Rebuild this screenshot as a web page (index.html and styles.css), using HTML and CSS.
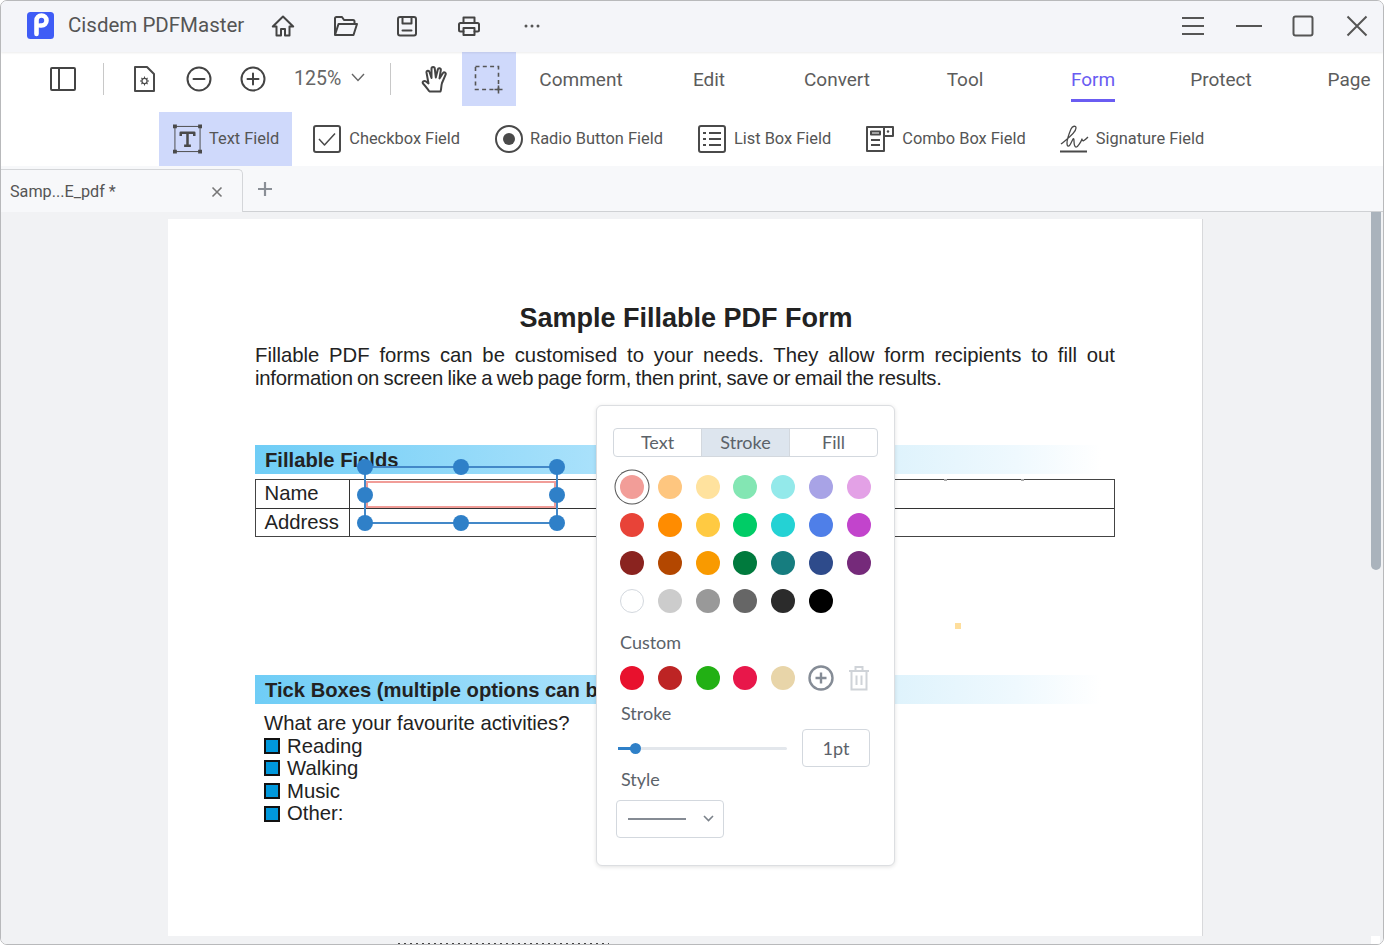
FILE: index.html
```html
<!DOCTYPE html>
<html lang="en">
<head>
<meta charset="utf-8">
<title>Cisdem PDFMaster</title>
<link rel="stylesheet" href="styles.css">
</head>
<body>
<div class="window">
  <header class="titlebar">
    <svg class="logo" viewBox="0 0 27 27"><rect width="27" height="27" rx="3.5" fill="#3f5cf6"/><path d="M9.5 22 V8.500 a5 5 0 1 1 5 5 h-1.500" fill="none" stroke="#fff" stroke-width="4.600" stroke-linecap="round"/></svg>
    <span class="app-name">Cisdem PDFMaster</span>
    <div class="title-tools">
      <div class="title-btn"><svg class="ico" width="24" height="24" viewBox="0 0 24 24"><path d="M12 2.500 1.800 12.500H5.500V21.500H10V15H14V21.500H18.500V12.500H22.200Z"/></svg></div>
      <div class="title-btn"><svg class="ico" width="25" height="24" viewBox="0 0 25 24"><path d="M2 21V4.500A1.500 1.500 0 0 1 3.500 3H9L11 6H20A1.500 1.500 0 0 1 21.500 7.500V10M2 21 5.500 10H24L20.500 21Z"/></svg></div>
      <div class="title-btn"><svg class="ico" width="22" height="24" viewBox="0 0 22 24"><rect x="2" y="3" width="18" height="18.500" rx="2"/><path d="M6.500 3V9.500H15.500V3M6.500 16.500H15.500"/></svg></div>
      <div class="title-btn"><svg class="ico" width="24" height="24" viewBox="0 0 24 24"><path d="M6.500 9V3.500H17.500V9M6.500 17.500H3.500A1.500 1.500 0 0 1 2 16V10.500A1.500 1.500 0 0 1 3.500 9H20.500A1.500 1.500 0 0 1 22 10.500V16A1.500 1.500 0 0 1 20.500 17.500H17.500"/><rect x="6.500" y="14" width="11" height="7"/></svg></div>
      <div class="title-btn"><svg width="16" height="6" viewBox="0 0 16 6"><circle cx="2" cy="3" r="1.500" fill="#555"/><circle cx="8" cy="3" r="1.500" fill="#555"/><circle cx="14" cy="3" r="1.500" fill="#555"/></svg></div>
    </div>
    <div class="win-tools">
      <div class="win-btn win-menu"><svg class="ico-thin" width="24" height="20" viewBox="0 0 24 20"><path d="M1 2H23M1 10H23M1 18H23"/></svg></div>
      <div class="win-btn"><svg class="ico-thin" width="26" height="4" viewBox="0 0 26 4"><path d="M0 2H26"/></svg></div>
      <div class="win-btn"><svg class="ico-thin" width="22" height="22" viewBox="0 0 22 22"><rect x="1.500" y="1.500" width="19" height="19" rx="2"/></svg></div>
      <div class="win-btn win-close"><svg class="ico-thin" width="22" height="22" viewBox="0 0 22 22"><path d="M1.500 1.500 20.500 20.500M20.500 1.500 1.500 20.500"/></svg></div>
    </div>
  </header>

  <nav class="toolbar">
    <div class="tool"><svg class="ico" width="26" height="26" viewBox="0 0 26 26"><rect x="1" y="2" width="24" height="22" rx="1"/><path d="M9 2V24"/></svg></div>
    <div class="sep"></div>
    <div class="tool"><svg class="ico-mid" width="24" height="28" viewBox="1 0 24 28"><path d="M3 2H15L22 9V26H3Z"/><circle cx="12.500" cy="16" r="2.600" stroke-width="1.300"/><path d="M12.500 11.500V13M12.500 19V20.500M8 16H9.500M15.500 16H17M9.400 12.900 10.400 13.900M14.600 18.100 15.600 19.100M15.600 12.900 14.600 13.900M10.400 18.100 9.400 19.100" stroke-width="1.100"/></svg></div>
    <div class="tool"><svg class="ico" width="26" height="26" viewBox="0 0 26 26"><circle cx="13" cy="13" r="11.500"/><path d="M7.500 13H18.500"/></svg></div>
    <div class="tool"><svg class="ico" width="26" height="26" viewBox="0 0 26 26"><circle cx="13" cy="13" r="11.500"/><path d="M7.500 13H18.500M13 7.500V18.500"/></svg></div>
    <div class="zoom-level"><span>125%</span><svg class="zoom-chev" width="14" height="9" viewBox="0 0 14 9"><path d="M1 1 7 7.500 13 1"/></svg></div>
    <div class="sep"></div>
    <div class="tool tool-hand"><svg class="ico" width="28" height="28" viewBox="0 0 28 28"><path d="M8.500 26.500C6.500 24 4.500 21 2 18.500 1 17 3 15 5 16.500L7.500 18.500 5.500 7.500C5.200 5.500 8 5 8.500 7L10.500 13 10.500 3.800C10.500 1.500 13.700 1.500 13.800 3.800L14.800 12.500 16.800 4.500C17.300 2.500 20.200 3 19.800 5.200L18.500 13.500 22 8C23.200 6.500 25.500 7.800 24.500 9.800L21 18C20 21 20.500 24 19.500 26.500Z"/></svg></div>
    <div class="tool tool-active"><svg class="ico-dash" width="30" height="30" viewBox="1.500 .5 30 30"><rect x="3" y="3" width="23" height="23" stroke-dasharray="4 3.300"/><path class="solid" d="M26 22V30M22 26H30"/></svg></div>
    <div class="menu-tab"><span>Comment</span></div>
    <div class="menu-tab"><span>Edit</span></div>
    <div class="menu-tab"><span>Convert</span></div>
    <div class="menu-tab"><span>Tool</span></div>
    <div class="menu-tab menu-tab-active"><span>Form</span></div>
    <div class="menu-tab"><span>Protect</span></div>
    <div class="menu-tab"><span>Page</span></div>
  </nav>

  <div class="fields">
    <div class="field field-active">
      <svg class="ico-mid" width="29" height="30" viewBox="0 0 30 30"><rect x="2" y="2" width="26" height="26" stroke-width="1"/><path class="solid-fill" d="M0 0h4v4H0zM26 0h4v4h-4zM0 26h4v4H0zM26 26h4v4h-4z"/><path d="M8 12V8.500H22V12M15 8.500V22M11.500 22H18.500" stroke-width="2.600"/></svg>
      <span>Text Field</span>
    </div>
    <div class="field field-wide">
      <svg class="ico-mid" width="28" height="28" viewBox="0 0 28 28"><rect x="1" y="1" width="26" height="26" rx="2"/><path d="M6 14 11.500 20 22 8.500" stroke-width="1.500"/></svg>
      <span>Checkbox Field</span>
    </div>
    <div class="field">
      <svg class="ico-mid" width="28" height="28" viewBox="0 0 28 28"><circle cx="14" cy="14" r="13"/><circle class="solid-fill" cx="14" cy="14" r="6"/></svg>
      <span>Radio Button Field</span>
    </div>
    <div class="field field-wide">
      <svg class="ico-mid" width="28" height="28" viewBox="0 0 28 28"><rect x="1" y="1" width="26" height="26" rx="2"/><path d="M5 8H8M11 8H23M5 14H8M11 14H23M5 20H8M11 20H23" stroke-width="2"/></svg>
      <span>List Box Field</span>
    </div>
    <div class="field field-wide">
      <svg class="ico-mid" width="28" height="28" viewBox="0 0 28 28"><path d="M18 2H27V11H18M1 2H18V26H1ZM18 11V17"/><path d="M5 6.500H14V9.500H5ZM5 15H14M5 20H14" stroke-width="2"/><circle class="solid-fill" cx="22" cy="6.500" r="1.200"/></svg>
      <span>Combo Box Field</span>
    </div>
    <div class="field field-sign">
      <svg class="ico-mid" width="30" height="28" viewBox="0 0 30 28"><path d="M2 19C8 14 17 8 17 3 17 .5 13.500 .5 12 4 9.500 10 8 14 8 18 8 22 10 22 11.500 19L14 14C14.500 13 15 14 15 16 15 20 16 22.500 17.500 22 19 21.500 22 17 23 14 23.500 17 25 16 29 12" stroke-width="1.300"/><path d="M1 26.500H28" stroke-width="2"/></svg>
      <span>Signature Field</span>
    </div>
  </div>

  <div class="tabbar">
    <div class="doc-tab">
      <span class="doc-name">Samp...E_pdf *</span>
      <svg class="tab-close" width="12" height="12" viewBox="0 0 12 12"><path d="M1.500 1.500 10.500 10.500M10.500 1.500 1.500 10.500"/></svg>
    </div>
    <svg class="tab-add" width="16" height="16" viewBox="0 0 16 16"><path d="M8 1V15M1 8H15"/></svg>
  </div>

  <main class="doc-area">
    <article class="page">
      <h1 class="pdf-title">Sample Fillable PDF Form</h1>
      <p class="pdf-line pdf-line-just">Fillable PDF forms can be customised to your needs. They allow form recipients to fill out</p>
      <p class="pdf-line pdf-line-tight">information on screen like a web page form, then print, save or email the results.</p>

      <h2 class="band band-first">Fillable Fields</h2>
      <div class="form-table">
        <div class="form-row"><div class="form-label">Name</div><div class="form-cell"></div></div>
        <div class="form-row"><div class="form-label">Address</div><div class="form-cell"></div></div>
        <i class="nick nick-a"></i><i class="nick nick-b"></i>
        <div class="selection">
          <div class="sel-field"></div>
          <i class="handle h-tl"></i><i class="handle h-tc"></i><i class="handle h-tr"></i>
          <i class="handle h-ml"></i><i class="handle h-mr"></i>
          <i class="handle h-bl"></i><i class="handle h-bc"></i><i class="handle h-br"></i>
        </div>
      </div>
      <i class="speck"></i>

      <h2 class="band band-second">Tick Boxes (multiple options can be selected)</h2>
      <div class="ticks">
        <div class="tick-q">What are your favourite activities?</div>
        <div class="tick-row"><i class="tick-box"></i>Reading</div>
        <div class="tick-row"><i class="tick-box"></i>Walking</div>
        <div class="tick-row"><i class="tick-box"></i>Music</div>
        <div class="tick-row"><i class="tick-box"></i>Other:</div>
      </div>
    </article>
    <div class="scrollbar"><div class="scroll-thumb"></div></div>
  </main>
  <footer class="bottom-strip"></footer>

  <aside class="popover">
    <div class="seg">
      <div class="seg-item">Text</div>
      <div class="seg-item seg-on">Stroke</div>
      <div class="seg-item">Fill</div>
    </div>
    <div class="swatches">
      <div class="cell"><i class="sw sw-picked c1"></i></div><div class="cell"><i class="sw c2"></i></div><div class="cell"><i class="sw c3"></i></div><div class="cell"><i class="sw c4"></i></div><div class="cell"><i class="sw c5"></i></div><div class="cell"><i class="sw c6"></i></div><div class="cell"><i class="sw c7"></i></div>
      <div class="cell"><i class="sw c8"></i></div><div class="cell"><i class="sw c9"></i></div><div class="cell"><i class="sw c10"></i></div><div class="cell"><i class="sw c11"></i></div><div class="cell"><i class="sw c12"></i></div><div class="cell"><i class="sw c13"></i></div><div class="cell"><i class="sw c14"></i></div>
      <div class="cell"><i class="sw c15"></i></div><div class="cell"><i class="sw c16"></i></div><div class="cell"><i class="sw c17"></i></div><div class="cell"><i class="sw c18"></i></div><div class="cell"><i class="sw c19"></i></div><div class="cell"><i class="sw c20"></i></div><div class="cell"><i class="sw c21"></i></div>
      <div class="cell"><i class="sw c22"></i></div><div class="cell"><i class="sw c23"></i></div><div class="cell"><i class="sw c24"></i></div><div class="cell"><i class="sw c25"></i></div><div class="cell"><i class="sw c26"></i></div><div class="cell"><i class="sw c27"></i></div>
    </div>
    <div class="pop-label pop-custom">Custom</div>
    <div class="swatches swatches-custom">
      <div class="cell"><i class="sw c28"></i></div><div class="cell"><i class="sw c29"></i></div><div class="cell"><i class="sw c30"></i></div><div class="cell"><i class="sw c31"></i></div><div class="cell"><i class="sw c32"></i></div>
      <div class="cell"><svg class="add-ico" width="26" height="26" viewBox="0 0 26 26"><circle cx="13" cy="13" r="11.500"/><path d="M7.500 13H18.500M13 7.500V18.500"/></svg></div>
      <div class="cell"><svg class="trash-ico" width="24" height="26" viewBox="0 0 24 26"><path d="M2 6H22M8.500 6V2H15.500V6M4.500 6V24.500H19.500V6M9.500 10.500V20M14.500 10.500V20"/></svg></div>
    </div>
    <div class="pop-label pop-stroke">Stroke</div>
    <div class="stroke-row">
      <div class="slider"><div class="slider-fill"></div><div class="slider-knob"></div></div>
      <div class="pt-input">1pt</div>
    </div>
    <div class="pop-label pop-style">Style</div>
    <div class="style-select">
      <i class="style-line"></i>
      <svg class="style-chev" width="11" height="7" viewBox="0 0 11 7"><path d="M1 1 5.500 5.500 10 1"/></svg>
    </div>
  </aside>
</div>
</body>
</html>
```
FILE: styles.css
```css
* { box-sizing: border-box; }
html, body { margin: 0; padding: 0; background: #fff; }
body { font-family: "Liberation Sans", Arial, sans-serif; color: #555; }
i { display: block; }
svg { display: block; flex: none; }

.window {
  position: relative;
  width: 1384px;
  height: 945px;
  border: 1px solid #b8b9bb;
  border-radius: 7px;
  overflow: hidden;
  display: flex;
  flex-direction: column;
  background: #fff;
}

.ico { fill: none; stroke: #444; stroke-width: 2; stroke-linejoin: round; stroke-linecap: round; }
.ico-mid { fill: none; stroke: #4a4a4a; stroke-width: 2; stroke-linejoin: round; }
.ico-thin { fill: none; stroke: #555; stroke-width: 2; }
.ico-dash { fill: none; stroke: #555; stroke-width: 1.600; }
.ico-dash .solid { stroke-dasharray: none; }
.solid-fill { fill: #4a4a4a; stroke: none; }
.zoom-chev { fill: none; stroke: #666; stroke-width: 1.400; margin-top: -1px; }

/* title bar */
.titlebar {
  flex: none;
  height: 51px;
  display: flex;
  align-items: center;
  padding-left: 26px;
  background: #f4f5f9;
  box-shadow: 0 1px 2px rgba(0, 0, 0, 0.08);
  position: relative;
  z-index: 1;
}
.logo { width: 27px; height: 27px; margin-top: -2px; }
.app-name { margin-left: 14px; font-family: Roboto, sans-serif; font-size: 20.500px; margin-top: -4px; color: #555; white-space: nowrap; }
.title-tools { display: flex; margin-left: 8px; margin-top: -2px; }
.title-btn { width: 62px; height: 50px; display: flex; align-items: center; justify-content: center; }
.title-btn:last-child { margin-left: 1px; }
.win-tools { display: flex; margin-left: auto; margin-top: -2px; }
.win-btn { width: 54px; height: 50px; display: flex; align-items: center; justify-content: center; }
.win-menu { margin-right: 2px; width: 54px; }
.win-close { width: 53px; }

/* main toolbar */
.toolbar { flex: none; height: 54px; display: flex; padding-left: 35px; background: #fff; }
.tool { flex: none; width: 54px; height: 54px; display: flex; align-items: center; justify-content: center; }
.tool-hand { margin-left: 3px; }
.tool-active { background: #cfd9fb; margin-right: 1px; }
.sep { flex: none; width: 28px; position: relative; }
.sep::after { content: ""; position: absolute; left: 13px; top: 11px; height: 32px; width: 1px; background: #c8c8c8; }
.zoom-level { flex: none; width: 97px; padding-left: 14px; padding-bottom: 2px; display: flex; align-items: center; gap: 10px; font-family: Roboto, sans-serif; font-size: 19.500px; color: #666; }
.menu-tab { flex: none; width: 128px; display: flex; justify-content: center; align-items: flex-start; padding-top: 16px; font-family: Roboto, sans-serif; font-size: 19px; line-height: 23px; color: #5c5c5c; }
.menu-tab span { display: inline-block; }
.menu-tab-active span { color: #6a5cf2; border-bottom: 3px solid #6a5cf2; padding-bottom: 8px; }

/* form field row */
.fields { flex: none; height: 54px; margin-top: 6px; padding-left: 158px; display: flex; gap: 7px; background: #fff; }
.field { display: flex; align-items: center; gap: 7px; padding: 0 14px; font-family: Roboto, sans-serif; font-size: 16.400px; color: #555; white-space: nowrap; }
.field span { padding-bottom: 2px; }
.field-active { background: #cfd9fb; padding-right: 13px; }
.field-wide { gap: 8px; }
.field-sign { margin-left: -2px; }

/* document tabs */
.tabbar { flex: none; height: 46px; display: flex; align-items: flex-start; background: #f7f8fa; border-bottom: 1px solid #cfd1d4; position: relative; }
.doc-tab { width: 243px; height: 43px; margin-top: 3px; margin-left: -1px; padding: 0 18px 0 9px; display: flex; align-items: center; justify-content: space-between; background: #f7f8fa; border: 1px solid #d4d6d9; border-bottom: none; border-radius: 0 5px 0 0; }
.doc-name { font-family: Roboto, sans-serif; font-size: 16.200px; color: #555; white-space: nowrap; }
.tab-close { fill: none; stroke: #777; stroke-width: 1.600; margin-right: 1px; margin-top: 1px; }
.tab-add { fill: none; stroke: #8a8f96; stroke-width: 2.200; margin-left: 14px; margin-top: 15px; }

/* document area */
.doc-area { flex: 1 1 0; min-height: 0; position: relative; background: #f1f2f4; padding: 7px 0 0 167px; overflow: hidden; }
.page { position: relative; width: 1035px; height: 717px; background: #fff; border-right: 1px solid #d8d9db; padding: 0 87px; color: #222; overflow: hidden; }
.pdf-title { margin: 0; padding: 82px 0 0 2px; font-size: 27px; line-height: 34px; font-weight: 700; text-align: center; color: #222; }
.pdf-line { margin: 0; font-size: 20.300px; line-height: 23px; color: #222; white-space: nowrap; }
.pdf-line-just { margin-top: 9px; white-space: normal; text-align: justify; text-align-last: justify; }
.pdf-line-tight { word-spacing: -1px; letter-spacing: -0.240px; }
.band { margin: 0; height: 29px; width: 846px; padding-left: 10px; font-size: 20.200px; line-height: 30px; font-weight: 700; color: #222; white-space: nowrap; overflow: hidden; background: linear-gradient(90deg, #6fcdf6 0%, #a9e1fb 40%, #dff3fc 76%, #eff9fe 90%, #ffffff 100%); }
.band-first { margin-top: 55px; }
.band-second { margin-top: 138px; }
.form-table { position: relative; margin-top: 5px; width: 860px; border: 1px solid #444; }
.form-row { display: flex; height: 28px; }
.form-row + .form-row { border-top: 1px solid #333; height: 28px; }
.form-label { width: 94px; padding-left: 8.500px; border-right: 1px solid #333; font-size: 20.300px; line-height: 27px; color: #222; }
.form-cell { flex: 1; }
.nick { position: absolute; top: -1px; width: 3px; height: 2px; background: #aaa; }
.nick-a { left: 688px; }
.nick-b { left: 765px; }
.selection { position: absolute; left: 108px; top: -14px; width: 194px; height: 58px; border: 2px solid #4388c8; }
.sel-field { position: absolute; left: 0; top: 13px; width: 190px; height: 27px; border: 2px solid #f19d98; }
.handle { position: absolute; width: 16px; height: 16px; border-radius: 50%; background: #2f80c8; }
.h-tl, .h-ml, .h-bl { left: -9px; }
.h-tc, .h-bc { left: 87px; }
.h-tr, .h-mr, .h-br { right: -9px; }
.h-tl, .h-tc, .h-tr { top: -9px; }
.h-ml, .h-mr { top: 19px; }
.h-bl, .h-bc, .h-br { bottom: -9px; }
.speck { position: absolute; left: 787px; top: 404px; width: 6px; height: 6px; background: #fede9c; }
.ticks { padding: 8px 0 0 9px; font-size: 20.300px; line-height: 22.600px; color: #222; }
.tick-row { display: flex; align-items: center; gap: 7px; }
.tick-box { width: 16px; height: 16px; border: 2px solid #111; background: #0098dc; }

.scrollbar { position: absolute; right: 2px; top: 0; width: 11px; height: 100%; }
.scroll-thumb { width: 10px; height: 358px; margin-left: 1px; background: #aab3bc; border-radius: 0 0 5px 5px; }
.bottom-strip { flex: none; height: 8px; background: #f1f2f4; position: relative; }
.bottom-strip::before { content: ""; position: absolute; right: 3px; top: 0; width: 9px; height: 8px; background: #fff; }
.bottom-strip::after { content: ""; position: absolute; left: 397px; bottom: 0; width: 211px; height: 1px; background: repeating-linear-gradient(90deg, #444 0 2px, transparent 2px 6px); }

/* colour popover */
.popover {
  position: absolute;
  left: 595px;
  top: 404px;
  width: 299px;
  height: 461px;
  padding: 22px 16px 0 16px;
  background: #fff;
  border: 1px solid #dcdee1;
  border-radius: 6px;
  box-shadow: 0 1px 4px rgba(0, 0, 0, 0.12);
  font-family: Lato, sans-serif;
  color: #5b6269;
}
.seg { display: flex; height: 29px; border: 1px solid #d3d8de; border-radius: 4px; overflow: hidden; }
.seg-item { flex: 1; display: flex; align-items: center; justify-content: center; padding-bottom: 1px; font-size: 18px; color: #5b6269; }
.seg-item + .seg-item { border-left: 1px solid #d3d8de; }
.seg-on { background: #dde5ee; }
.swatches { display: grid; grid-template-columns: repeat(7, 1fr); grid-auto-rows: 38px; margin-top: 11px; }
.swatches-custom { margin-top: 4px; }
.cell { display: flex; align-items: center; justify-content: center; }
.sw { width: 24px; height: 24px; border-radius: 50%; }
.sw-picked { box-shadow: 0 0 0 4.500px #fff, 0 0 0 5.500px #555; }
.pop-label { font-size: 18px; line-height: 22px; padding-bottom: 2px; color: #5b6269; }
.pop-custom { margin-top: 11px; padding-left: 7px; }
.pop-stroke { margin-top: 5px; padding-left: 8px; }
.pop-style { margin-top: 1px; padding-left: 8px; }
.stroke-row { margin-top: 3px; display: flex; align-items: center; padding-left: 5px; }
.slider { position: relative; width: 169px; height: 3px; background: #e3e7ec; border-radius: 2px; }
.slider-fill { width: 17px; height: 3px; background: #2f80c8; }
.slider-knob { position: absolute; left: 12px; top: -4px; width: 11px; height: 11px; border-radius: 50%; background: #2f80c8; }
.pt-input { margin-left: 15px; width: 68px; height: 38px; padding-bottom: 1px; display: flex; align-items: center; justify-content: center; border: 1px solid #d3d8de; border-radius: 4px; font-size: 18px; }
.style-select { margin: 8px 0 0 3px; width: 108px; height: 38px; display: flex; align-items: center; padding: 0 9px 0 11px; border: 1px solid #d3d8de; border-radius: 4px; }
.style-line { width: 58px; height: 2px; background: #858b94; }
.style-chev { margin-left: auto; margin-top: -2px; fill: none; stroke: #7b828a; stroke-width: 1.600; }
.add-ico { fill: none; stroke: #858c96; stroke-width: 2.400; }
.trash-ico { fill: none; stroke: #cfd3d8; stroke-width: 2; }

.c1 { background: #f29d98; } .c2 { background: #fec67f; } .c3 { background: #ffe29e; } .c4 { background: #83e6b3; }
.c5 { background: #93e9ea; } .c6 { background: #a8a3e6; } .c7 { background: #e3a1e6; }
.c8 { background: #e84338; } .c9 { background: #ff8c00; } .c10 { background: #ffca42; } .c11 { background: #00cc66; }
.c12 { background: #24d2d4; } .c13 { background: #4f7fe8; } .c14 { background: #c244cc; }
.c15 { background: #8a231f; } .c16 { background: #b34700; } .c17 { background: #f99a00; } .c18 { background: #007a3d; }
.c19 { background: #167d7f; } .c20 { background: #2e4b8b; } .c21 { background: #752a7a; }
.c22 { background: #fff; border: 1px solid #d3d8de; } .c23 { background: #ccc; } .c24 { background: #999; } .c25 { background: #666; }
.c26 { background: #2b2b2b; } .c27 { background: #000; }
.c28 { background: #e8112d; } .c29 { background: #bd2424; } .c30 { background: #22b014; } .c31 { background: #e8174a; } .c32 { background: #e8d5a9; }
```
